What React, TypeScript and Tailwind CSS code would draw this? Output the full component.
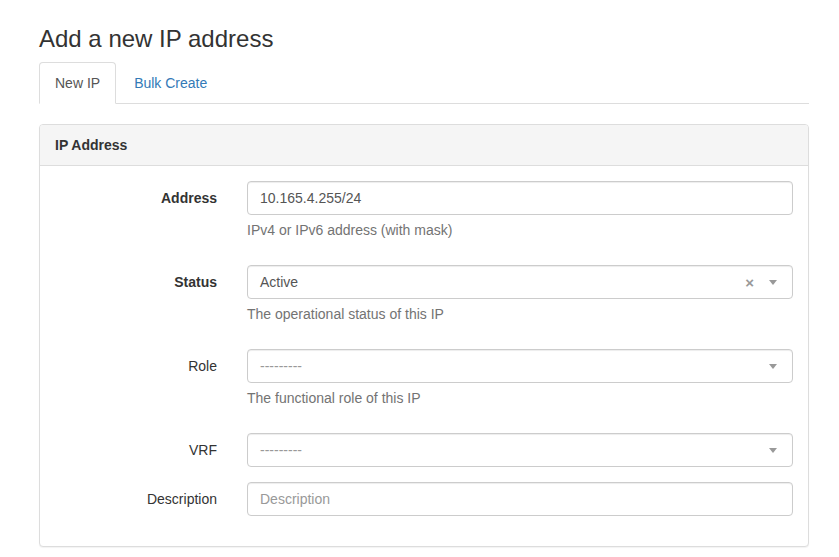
import React from 'react';

type Field = {
  label: string;
  required?: boolean;
  kind: 'text' | 'select';
  value?: string;
  placeholder?: string;
  clearable?: boolean;
  help?: string;
};

const fields: Field[] = [
  { label: 'Address', required: true, kind: 'text', value: '10.165.4.255/24', help: 'IPv4 or IPv6 address (with mask)' },
  { label: 'Status', required: true, kind: 'select', value: 'Active', clearable: true, help: 'The operational status of this IP' },
  { label: 'Role', kind: 'select', placeholder: '---------', help: 'The functional role of this IP' },
  { label: 'VRF', kind: 'select', placeholder: '---------' },
  { label: 'Description', kind: 'text', placeholder: 'Description' },
];

function Control({ f }: { f: Field }) {
  const base =
    'flex h-[34px] w-full items-center rounded border border-[#ccc] bg-white px-3 text-sm leading-5 shadow-[inset_0_1px_1px_rgba(0,0,0,0.075)]';
  if (f.kind === 'text') {
    return (
      <div className={base}>
        {f.value ? <span className="text-[#555]">{f.value}</span> : <span className="text-[#999]">{f.placeholder}</span>}
      </div>
    );
  }
  return (
    <div className={base}>
      <span className={`flex-1 ${f.value ? 'text-[#555]' : 'text-[#999]'}`}>{f.value ?? f.placeholder}</span>
      {f.clearable && <span className="mr-[15px] text-[15px] font-bold leading-none text-[#999]">×</span>}
      <span className="mr-[3px] h-0 w-0 border-x-[4px] border-t-[5px] border-x-transparent border-t-[#999]" />
    </div>
  );
}

export default function App() {
  return (
    <div className="min-h-[557px] bg-white pl-[39px] pr-[30px] font-['Liberation_Sans',Arial,sans-serif] text-sm leading-5 text-[#333]">
      <h3 className="mb-[10px] pt-[26px] text-[24px] font-normal leading-[26px] text-[#333]">Add a new IP address</h3>

      <ul className="flex border-b border-[#ddd]">
        <li className="-mb-px mr-[2px]">
          <span className="block rounded-t border border-[#ddd] border-b-transparent bg-white px-[15px] py-[10px] text-[#555]">
            New IP
          </span>
        </li>
        <li className="-mb-px mr-[2px]">
          <span className="block rounded-t border border-transparent px-[15px] py-[10px] text-[#337ab7]">Bulk Create</span>
        </li>
      </ul>

      <div className="mt-5 rounded border border-[#ddd] bg-white shadow-[0_1px_1px_rgba(0,0,0,0.05)]">
        <div className="rounded-t-[3px] border-b border-[#ddd] bg-[#f5f5f5] px-[15px] py-[10px] font-bold">IP Address</div>
        <div className="py-[15px]">
          {fields.map((f) => (
            <div key={f.label} className="mb-[15px] flex">
              <label className={`w-1/4 px-[15px] pt-[7px] text-right ${f.required ? 'font-bold' : 'font-normal'}`}>
                {f.label}
              </label>
              <div className="w-3/4 px-[15px]">
                <Control f={f} />
                {f.help && <p className="mb-[10px] mt-[5px] text-[#737373]">{f.help}</p>}
              </div>
            </div>
          ))}
        </div>
      </div>
    </div>
  );
}
